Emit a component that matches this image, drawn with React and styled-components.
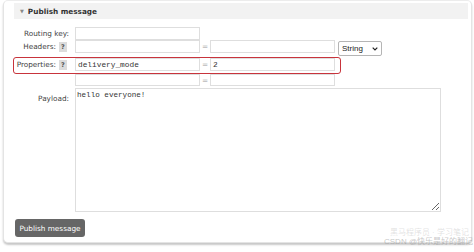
import React from "react";
import styled, { createGlobalStyle } from "styled-components";

const Global = createGlobalStyle`
  html, body { margin: 0; padding: 0; background: #fff; }
  body { font-family: "DejaVu Sans", Verdana, sans-serif; font-size: 7.3px; color: #444; }
  * { box-sizing: border-box; }
`;

const Page = styled.div`
  position: relative;
  width: 474px;
  height: 252px;
  overflow: hidden;
  padding: 0 2px 0 3px;
`;

const Panel = styled.section`
  height: 243px;
  border: 1px solid #e4e4e4;
  border-top-color: #ececec;
  border-radius: 5px;
  box-shadow: 0 2px 2px rgba(0, 0, 0, 0.22);
  padding: 2px 3px 0 10px;
  background: #fff;
`;

const Header = styled.div`
  height: 16px;
  background: #f2f2f2;
  display: flex;
  align-items: center;
  gap: 4px;
  padding-left: 6px;
  font-weight: bold;
  color: #333;
`;

const Arrow = styled.span`
  font-size: 5px;
  color: #888;
  line-height: 1;
`;

const Form = styled.div`
  position: relative;
  margin-top: 8px;
  display: flex;
  flex-direction: column;
`;

const Row = styled.div`
  display: flex;
  align-items: flex-start;
  margin-top: ${(p) => p.$gap || 0}px;
`;

const Label = styled.div`
  width: 55px;
  margin-right: 6px;
  display: flex;
  justify-content: flex-end;
  align-items: center;
  height: ${(p) => p.$h || 13}px;
  padding-top: ${(p) => p.$pt || 0}px;
  white-space: nowrap;
  color: #444;
`;

const Help = styled.span`
  display: inline-flex;
  align-items: center;
  justify-content: center;
  width: 8px;
  height: 10px;
  margin-left: 3px;
  margin-right: 2px;
  background: #dcdcdc;
  color: #555;
  font-weight: bold;
  font-size: 6.5px;
`;

const Input = styled.div`
  width: 125px;
  height: ${(p) => p.$h || 13}px;
  border: 1px solid #dedede;
  background: #fff;
  font-family: "Liberation Mono", "DejaVu Sans Mono", monospace;
  font-size: 7.8px;
  color: #333;
  display: flex;
  align-items: center;
  padding-left: 2px;
  white-space: nowrap;
`;

const Eq = styled.span`
  width: 10px;
  height: 13px;
  display: flex;
  align-items: center;
  justify-content: center;
  color: #999;
`;

const Select = styled.div`
  margin-left: 3px;
  margin-top: 1px;
  width: 44px;
  height: 15px;
  border: 1px solid #b5b5b5;
  border-radius: 2px;
  background: #fff;
  display: flex;
  align-items: center;
  justify-content: space-between;
  padding: 0 3px 0 3px;
  font-family: "Liberation Sans", Arial, sans-serif;
  font-size: 8px;
  color: #222;
`;

const Textarea = styled.textarea`
  display: block;
  width: 366px;
  height: 124px;
  border: 1px solid #dedede;
  border-radius: 0;
  padding: 2px 1px;
  margin: 0;
  font-family: "Liberation Mono", "DejaVu Sans Mono", monospace;
  font-size: 7.6px;
  color: #333;
  outline: none;
  resize: both;
`;

const Highlight = styled.div`
  position: absolute;
  left: -1px;
  top: 30px;
  width: 328px;
  height: 17px;
  border: 1.5px solid #c8343c;
  border-radius: 3px;
  pointer-events: none;
`;

const Button = styled.button`
  margin: 7px 0 0 1px;
  width: 70px;
  height: 18px;
  border: none;
  border-radius: 3px;
  background: #666;
  color: #fff;
  font-family: "DejaVu Sans", Verdana, sans-serif;
  font-size: 7.3px;
  padding: 0;
`;

const Watermark = styled.div`
  position: absolute;
  right: 1px;
  bottom: 6px;
  display: flex;
  flex-direction: column;
  align-items: flex-end;
  font-family: "Liberation Sans", "Noto Sans CJK SC", sans-serif;
  font-size: 8px;
  line-height: 9px;
  color: rgba(150, 150, 150, 0.55);
  pointer-events: none;
`;

const WatermarkTop = styled.span`
  color: rgba(170, 170, 170, 0.35);
  margin-right: 4px;
`;

function Chevron() {
  return (
    <svg width="6" height="4" viewBox="0 0 6 4">
      <path d="M0.7 0.7 L3 3 L5.3 0.7" fill="none" stroke="#222" strokeWidth="1.2" />
    </svg>
  );
}

export default function App() {
  return (
    <Page>
      <Global />
      <Panel>
        <Header>
          <Arrow>▼</Arrow>
          <span>Publish message</span>
        </Header>
        <Form>
          <Row>
            <Label>Routing key:</Label>
            <Input />
          </Row>
          <Row $gap={0}>
            <Label>
              Headers:<Help>?</Help>
            </Label>
            <Input />
            <Eq>=</Eq>
            <Input />
            <Select>
              <span>String</span>
              <Chevron />
            </Select>
          </Row>
          <Row $gap={2}>
            <Label>
              Properties:<Help>?</Help>
            </Label>
            <Input>delivery_mode</Input>
            <Eq>=</Eq>
            <Input>2</Input>
          </Row>
          <Row $gap={3}>
            <Label />
            <Input $h={12} />
            <Eq>=</Eq>
            <Input $h={12} />
          </Row>
          <Row $gap={1}>
            <Label $h={18} $pt={2}>Payload:</Label>
            <Textarea defaultValue="hello everyone!" spellCheck={false} />
          </Row>
          <Highlight />
        </Form>
        <Button>Publish message</Button>
      </Panel>
      <Watermark>
        <WatermarkTop>黑马程序员 · 学习笔记</WatermarkTop>
        <span>CSDN @快乐是好的翻记</span>
      </Watermark>
    </Page>
  );
}
